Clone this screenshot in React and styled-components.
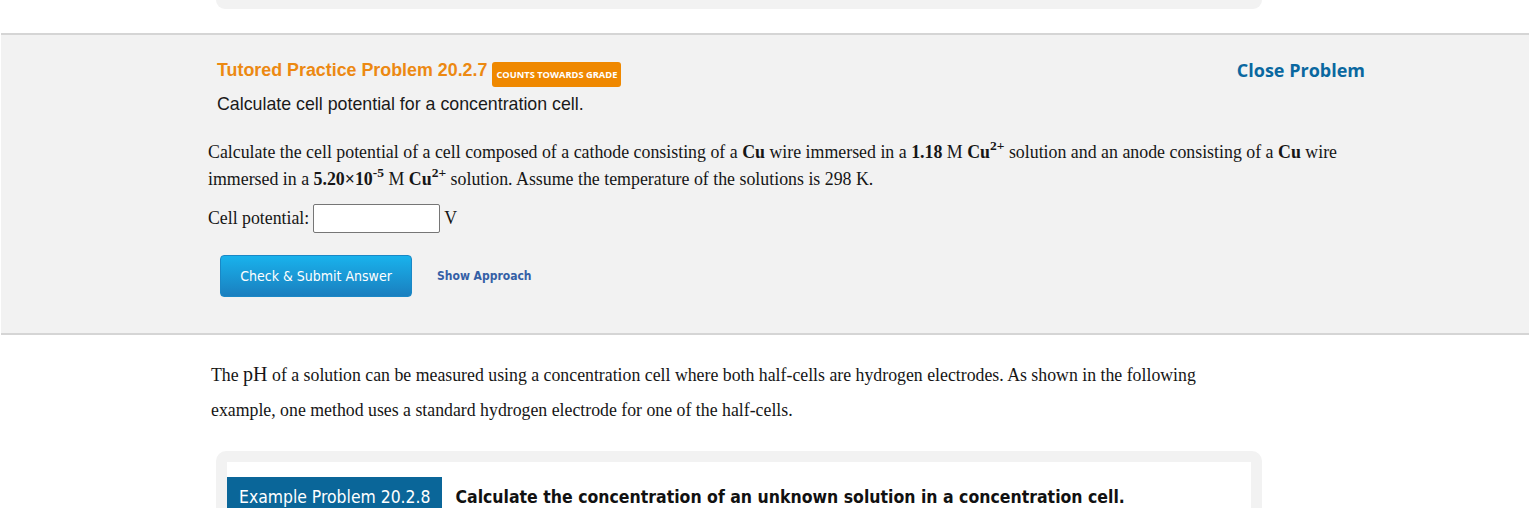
import React from "react";
import styled, { createGlobalStyle } from "styled-components";

const GlobalStyle = createGlobalStyle`
  html, body { margin: 0; padding: 0; background: #ffffff; }
  body { width: 1530px; overflow: hidden; }
`;

const Page = styled.div`
  width: 1530px;
  height: 508px;
  overflow: hidden;
  display: flex;
  flex-direction: column;

  & > * { flex-shrink: 0; }
`;

const TopCardEnd = styled.div`
  margin-left: 216px;
  width: 1046px;
  height: 9px;
  background: #f2f2f2;
  border-radius: 0 0 10px 10px;
`;

const Band = styled.section`
  margin: 24px 1px 0 1px;
  background: #f2f2f2;
  border-top: 2px solid #d5d5d5;
  border-bottom: 2px solid #d5d5d5;
  padding: 25px 0 36px 0;
  display: flex;
  flex-direction: column;
`;

const HeaderRow = styled.div`
  display: flex;
  justify-content: space-between;
  align-items: flex-start;
  padding: 0 164px 0 216px;
`;

const TitleBlock = styled.div`
  display: flex;
  flex-direction: column;
`;

const TitleLine = styled.div`
  display: flex;
  align-items: flex-start;
`;

const Title = styled.h2`
  margin: 0;
  font-family: "Liberation Sans", Arial, sans-serif;
  font-weight: bold;
  font-size: 17.85px;
  line-height: 20px;
  color: #ec8912;
`;

const Badge = styled.span`
  margin: 2px 0 0 5px;
  height: 25px;
  padding: 0 4px;
  display: inline-flex;
  align-items: center;
  background: #ef8800;
  border-radius: 3px;
  color: #ffffff;
  font-family: "Open Sans", sans-serif;
  font-weight: 700;
  font-size: 9.3px;
`;

const Subtitle = styled.p`
  margin: 7px 0 0 0;
  font-family: "Liberation Sans", Arial, sans-serif;
  font-size: 17.8px;
  line-height: 20px;
  color: #1a1a1a;
`;

const CloseLink = styled.a`
  font-family: "Open Sans", sans-serif;
  font-weight: 700;
  font-size: 18px;
  line-height: 20px;
  color: #0a68a0;
  text-decoration: none;
  cursor: pointer;
`;

const Body = styled.div`
  padding-left: 207px;
  display: flex;
  flex-direction: column;
  align-items: flex-start;
`;

const Question = styled.p`
  margin: 25px 0 0 0;
  width: 1150px;
  font-family: "Liberation Serif", "Times New Roman", serif;
  font-size: 17.85px;
  line-height: 27px;
  color: #161616;

  sup {
    font-size: 13.5px;
    line-height: 0;
    vertical-align: 8px;
    font-weight: bold;
  }
`;

const AnswerRow = styled.div`
  margin-top: 11px;
  display: flex;
  align-items: center;
  gap: 4px;
  font-family: "Liberation Serif", "Times New Roman", serif;
  font-size: 17.8px;
  color: #161616;
`;

const AnswerInput = styled.input`
  box-sizing: border-box;
  width: 127px;
  height: 29px;
  margin: 0;
  border: 1px solid #767676;
  border-radius: 2px;
  background: #ffffff;
`;

const Actions = styled.div`
  margin: 22px 0 0 12px;
  display: flex;
  align-items: center;
  gap: 25px;
`;

const SubmitButton = styled.button`
  box-sizing: border-box;
  width: 192px;
  height: 42px;
  border: 1px solid #1a88c6;
  border-radius: 4px;
  background: linear-gradient(#19b2ec, #1a7fbf);
  color: #ffffff;
  font-family: "DejaVu Sans Condensed", "DejaVu Sans", sans-serif;
  font-size: 14px;
  cursor: pointer;
`;

const ApproachLink = styled.a`
  font-family: "DejaVu Sans Condensed", "DejaVu Sans", sans-serif;
  font-weight: bold;
  font-size: 12px;
  color: #3560a6;
  text-decoration: none;
  cursor: pointer;
`;

const Main = styled.div`
  margin-left: 216px;
  width: 1046px;
  display: flex;
  flex-direction: column;
`;

const Intro = styled.p`
  margin: 22px 0 0 -5px;
  width: 1010px;
  font-family: "Liberation Serif", "Times New Roman", serif;
  font-size: 17.8px;
  line-height: 35px;
  color: #161616;
`;

const MathVar = styled.span`
  font-family: "Liberation Serif", "Times New Roman", serif;
  font-size: 20px;
`;

const ExampleCard = styled.div`
  margin-top: 23px;
  background: #f2f2f2;
  border-radius: 10px;
  padding: 11px 11px 0 11px;
`;

const ExampleInner = styled.div`
  background: #ffffff;
  padding-top: 15px;
  display: flex;
  align-items: center;
  gap: 13px;
`;

const ExampleLabel = styled.span`
  background: #0a6699;
  color: #ffffff;
  height: 40px;
  padding: 0 12px;
  display: inline-flex;
  align-items: center;
  font-family: "DejaVu Sans Condensed", "DejaVu Sans", sans-serif;
  font-size: 17.4px;
`;

const ExampleTitle = styled.span`
  font-family: "DejaVu Sans Condensed", "DejaVu Sans", sans-serif;
  font-weight: bold;
  font-size: 17.5px;
  color: #111111;
`;

export default function App() {
  return (
    <>
      <GlobalStyle />
      <Page>
        <TopCardEnd />
        <Band>
          <HeaderRow>
            <TitleBlock>
              <TitleLine>
                <Title>Tutored Practice Problem 20.2.7</Title>
                <Badge>COUNTS TOWARDS GRADE</Badge>
              </TitleLine>
              <Subtitle>Calculate cell potential for a concentration cell.</Subtitle>
            </TitleBlock>
            <CloseLink>Close Problem</CloseLink>
          </HeaderRow>
          <Body>
            <Question>
              Calculate the cell potential of a cell composed of a cathode consisting of a <b>Cu</b> wire
              immersed in a <b>1.18</b> M <b>Cu</b><sup>2+</sup> solution and an anode consisting of a{" "}
              <b>Cu</b> wire immersed in a <b>5.20×10</b><sup>-5</sup> M <b>Cu</b><sup>2+</sup> solution.
              Assume the temperature of the solutions is 298 K.
            </Question>
            <AnswerRow>
              <span>Cell potential:</span>
              <AnswerInput type="text" aria-label="Cell potential" />
              <span>V</span>
            </AnswerRow>
            <Actions>
              <SubmitButton>Check &amp; Submit Answer</SubmitButton>
              <ApproachLink>Show Approach</ApproachLink>
            </Actions>
          </Body>
        </Band>
        <Main>
          <Intro>
            The <MathVar>pH</MathVar> of a solution can be measured using a concentration cell where both
            half-cells are hydrogen electrodes. As shown in the following example, one method uses a
            standard hydrogen electrode for one of the half-cells.
          </Intro>
          <ExampleCard>
            <ExampleInner>
              <ExampleLabel>Example Problem 20.2.8</ExampleLabel>
              <ExampleTitle>
                Calculate the concentration of an unknown solution in a concentration cell.
              </ExampleTitle>
            </ExampleInner>
          </ExampleCard>
        </Main>
      </Page>
    </>
  );
}
